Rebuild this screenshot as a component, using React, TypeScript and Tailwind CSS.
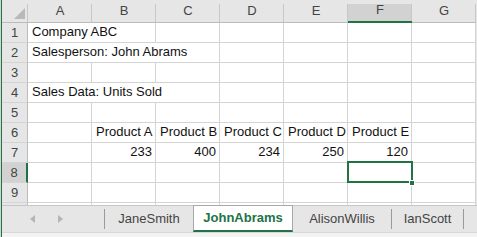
import React from "react";

const cols = ["A", "B", "C", "D", "E", "F", "G"];

type Cell = { text: string; align?: "left" | "right" };

const data: Record<number, Record<number, Cell>> = {
  1: { 0: { text: "Company ABC" } },
  2: { 0: { text: "Salesperson: John Abrams" } },
  4: { 0: { text: "Sales Data: Units Sold" } },
  6: {
    1: { text: "Product A" },
    2: { text: "Product B" },
    3: { text: "Product C" },
    4: { text: "Product D" },
    5: { text: "Product E" },
  },
  7: {
    1: { text: "233", align: "right" },
    2: { text: "400", align: "right" },
    3: { text: "234", align: "right" },
    4: { text: "250", align: "right" },
    5: { text: "120", align: "right" },
  },
};

// cells whose right gridline is covered by text spilling over
const covered = new Set(["1-0", "2-0", "2-1", "4-0", "4-1"]);

export default function App() {
  const rows = [1, 2, 3, 4, 5, 6, 7, 8, 9, 10];

  return (
    <div
      className="w-[477px] h-[237px] flex bg-white overflow-hidden text-[13px] text-[#222]"
      style={{ fontFamily: '"Liberation Sans", Arial, sans-serif' }}
    >
      {/* left edge */}
      <div className="w-[1px] bg-[#d4d4d4]" />
      <div className="w-[1px] bg-[#217346]" />

      <div className="flex-1 flex flex-col">
        {/* Sheet grid */}
        <div className="h-[205px] overflow-hidden bg-[#e6e6e6]">
          <div className="grid grid-cols-[26px_repeat(7,64px)] grid-rows-[23px_repeat(10,20px)]">
            {/* corner */}
            <div className="relative border-b border-[#bcbcbc] bg-[#e6e6e6]">
              <div className="absolute top-[4px] bottom-0 right-0 w-[1px] bg-[#c8c8c8]" />
              <div className="absolute right-[3px] bottom-[3px] w-0 h-0 border-l-[11px] border-l-transparent border-b-[11px] border-b-[#b9b9b9]" />
            </div>
            {cols.map((c) => {
              const sel = c === "F";
              return (
                <div
                  key={c}
                  className={
                    "relative flex items-end justify-center pb-[2px] text-[#444] bg-[#e6e6e6] " +
                    (sel ? "border-b-2 border-[#217346]" : "border-b border-[#bcbcbc]")
                  }
                >
                  {sel && (
                    <div className="absolute top-[4px] left-0 right-0 bottom-0 bg-[#d2d2d2]" />
                  )}
                  <div className="absolute top-[4px] bottom-0 right-0 w-[1px] bg-[#c8c8c8]" />
                  <span className="relative">{c}</span>
                </div>
              );
            })}

            {rows.map((r) => (
              <React.Fragment key={r}>
                <div
                  className={
                    "flex items-center justify-center border-b border-[#d4d4d4] text-[#444] " +
                    (r === 8
                      ? "bg-[#d2d2d2] border-r-2 border-r-[#217346]"
                      : "bg-[#e6e6e6] border-r border-r-[#bcbcbc]")
                  }
                >
                  {r}
                </div>
                {cols.map((c, ci) => {
                  const cell = data[r]?.[ci];
                  const selected = r === 8 && c === "F";
                  return (
                    <div
                      key={c}
                      className={
                        "relative bg-white border-b border-[#d4d4d4] " +
                        (covered.has(`${r}-${ci}`) ? "" : "border-r")
                      }
                    >
                      {cell && (
                        <div
                          className={
                            "absolute z-10 top-0 bottom-0 flex items-end pb-[1px] whitespace-nowrap text-[#111] " +
                            (cell.align === "right"
                              ? "right-[3px] justify-end"
                              : "left-[4px]")
                          }
                        >
                          {cell.text}
                        </div>
                      )}
                      {selected && (
                        <>
                          <div className="absolute z-10 -top-[2px] -left-[1px] right-[-2px] bottom-[-1px] border-2 border-[#217346]" />
                          <div className="absolute z-10 -right-[4px] -bottom-[4px] w-[6px] h-[6px] bg-[#217346] border border-white" />
                        </>
                      )}
                    </div>
                  );
                })}
              </React.Fragment>
            ))}
          </div>
        </div>

        {/* Sheet tabs */}
        <div className="h-[32px] flex flex-col border-t border-[#c6c6c6] bg-[#e6e6e6]">
          <div className="h-[26px] flex items-stretch">
            <div className="w-[102px] flex items-center">
              <div className="ml-[28px] w-0 h-0 border-y-[4px] border-y-transparent border-r-[5px] border-r-[#b5b5b5]" />
              <div className="ml-[23px] w-0 h-0 border-y-[4px] border-y-transparent border-l-[5px] border-l-[#b5b5b5]" />
            </div>
            <div className="w-[1px] my-[3px] bg-[#9a9a9a]" />
            <div className="w-[88px] flex items-center justify-center text-[#444]">
              JaneSmith
            </div>
            <div className="w-[100px] -mt-[1px] flex items-center justify-center bg-white border-x border-t border-[#a8a8a8] border-b-2 border-b-[#217346] font-bold text-[#217346]">
              JohnAbrams
            </div>
            <div className="w-[98px] flex items-center justify-center text-[#444]">
              AlisonWillis
            </div>
            <div className="w-[1px] my-[3px] bg-[#9a9a9a]" />
            <div className="w-[71px] flex items-center justify-center text-[#444]">
              IanScott
            </div>
            <div className="w-[1px] my-[3px] bg-[#9a9a9a]" />
          </div>
          <div className="flex-1 bg-[#f3f3f3] border-t border-[#d8d8d8]" />
        </div>
      </div>
    </div>
  );
}
